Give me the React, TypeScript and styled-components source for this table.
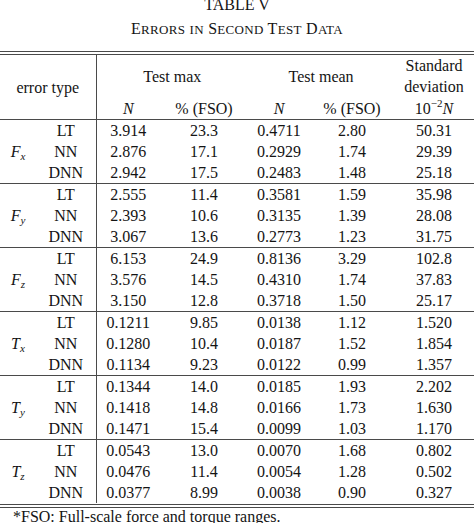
import React from "react";
import styled, { createGlobalStyle } from "styled-components";

const GlobalStyle = createGlobalStyle`
    html, body {
        margin: 0;
        padding: 0;
        background: #ffffff;
    }
    body {
        font-family: "Liberation Serif", "Times New Roman", serif;
        font-size: 16px;
        color: #141414;
        overflow: hidden;
    }
`;

const Page = styled.div`
    width: 474px;
    display: flex;
    flex-direction: column;
`;

const Caption = styled.div`
    display: flex;
    flex-direction: column;
    align-items: center;
    margin-top: -4px;
`;

const TableNo = styled.div`
    line-height: 18px;
`;

const Title = styled.div`
    line-height: 18px;
    margin-top: 6px;
    letter-spacing: 0.3px;
`;

const Sc = styled.span`
    font-size: 13px;
`;

const Rule = styled.div<{ $top: number }>`
    height: 2px;
    margin-top: ${p => p.$top}px;
    border-top: 1px solid #4a4a4a;
    border-bottom: 1px solid #4a4a4a;
`;

const Table = styled.table`
    width: 474px;
    table-layout: fixed;
    border-collapse: collapse;
    text-align: center;
`;

const Col = styled.col<{ $w: number }>`
    width: ${p => p.$w}px;
`;

const Head = styled.thead`
    border-bottom: 1px solid #4a4a4a;
`;

const HeadCell = styled.th<{ $h: number; $divider?: boolean }>`
    font-weight: normal;
    padding: 0;
    height: ${p => p.$h}px;
    line-height: 21px;
    vertical-align: middle;
    border-right: ${p => (p.$divider ? "1px solid #4a4a4a" : "none")};
`;

const Group = styled.tbody`
    & + & {
        border-top: 1px solid #4a4a4a;
    }
`;

const Cell = styled.td<{ $divider?: boolean }>`
    padding: 0;
    height: 21px;
    line-height: 20px;
    vertical-align: middle;
    border-right: ${p => (p.$divider ? "1px solid #4a4a4a" : "none")};
`;

const Italic = styled.i`
    font-style: italic;
`;

const Sub = styled.sub`
    font-size: 11px;
    font-style: italic;
    line-height: 0;
    vertical-align: -3px;
`;

const Sup = styled.sup`
    font-size: 11px;
    line-height: 0;
    vertical-align: 7px;
`;

const Footnote = styled.div`
    padding-left: 13px;
    line-height: 12px;
    margin-top: 3px;
`;

type Row = [string, string, string, string, string, string];

interface ErrorGroup {
    name: string;
    sub: string;
    rows: Row[];
}

const groups: ErrorGroup[] = [
    { name: "F", sub: "x", rows: [
        ["LT", "3.914", "23.3", "0.4711", "2.80", "50.31"],
        ["NN", "2.876", "17.1", "0.2929", "1.74", "29.39"],
        ["DNN", "2.942", "17.5", "0.2483", "1.48", "25.18"],
    ] },
    { name: "F", sub: "y", rows: [
        ["LT", "2.555", "11.4", "0.3581", "1.59", "35.98"],
        ["NN", "2.393", "10.6", "0.3135", "1.39", "28.08"],
        ["DNN", "3.067", "13.6", "0.2773", "1.23", "31.75"],
    ] },
    { name: "F", sub: "z", rows: [
        ["LT", "6.153", "24.9", "0.8136", "3.29", "102.8"],
        ["NN", "3.576", "14.5", "0.4310", "1.74", "37.83"],
        ["DNN", "3.150", "12.8", "0.3718", "1.50", "25.17"],
    ] },
    { name: "T", sub: "x", rows: [
        ["LT", "0.1211", "9.85", "0.0138", "1.12", "1.520"],
        ["NN", "0.1280", "10.4", "0.0187", "1.52", "1.854"],
        ["DNN", "0.1134", "9.23", "0.0122", "0.99", "1.357"],
    ] },
    { name: "T", sub: "y", rows: [
        ["LT", "0.1344", "14.0", "0.0185", "1.93", "2.202"],
        ["NN", "0.1418", "14.8", "0.0166", "1.73", "1.630"],
        ["DNN", "0.1471", "15.4", "0.0099", "1.03", "1.170"],
    ] },
    { name: "T", sub: "z", rows: [
        ["LT", "0.0543", "13.0", "0.0070", "1.68", "0.802"],
        ["NN", "0.0476", "11.4", "0.0054", "1.28", "0.502"],
        ["DNN", "0.0377", "8.99", "0.0038", "0.90", "0.327"],
    ] },
];

const widths = [36, 60, 64, 88, 62, 84, 80];

export default function App() {
    return (
        <Page>
            <GlobalStyle />
            <Caption>
                <TableNo>TABLE V</TableNo>
                <Title>
                    E<Sc>RRORS</Sc> <Sc>IN</Sc> S<Sc>ECOND</Sc> T<Sc>EST</Sc> D<Sc>ATA</Sc>
                </Title>
            </Caption>
            <Rule $top={12} />
            <Table>
                <colgroup>
                    {widths.map((w, i) => <Col key={i} $w={w} />)}
                </colgroup>
                <Head>
                    <tr>
                        <HeadCell $h={41} colSpan={2} rowSpan={2} $divider>error type</HeadCell>
                        <HeadCell $h={41} colSpan={2}>Test max</HeadCell>
                        <HeadCell $h={41} colSpan={2}>Test mean</HeadCell>
                        <HeadCell $h={41}>Standard<br />deviation</HeadCell>
                    </tr>
                    <tr>
                        <HeadCell $h={22}><Italic>N</Italic></HeadCell>
                        <HeadCell $h={22}>% (FSO)</HeadCell>
                        <HeadCell $h={22}><Italic>N</Italic></HeadCell>
                        <HeadCell $h={22}>% (FSO)</HeadCell>
                        <HeadCell $h={22}>10<Sup>−2</Sup><Italic>N</Italic></HeadCell>
                    </tr>
                </Head>
                {groups.map(g => (
                    <Group key={g.name + g.sub}>
                        {g.rows.map((r, i) => (
                            <tr key={r[0]}>
                                {i === 0 && (
                                    <Cell rowSpan={3}>
                                        <Italic>{g.name}</Italic><Sub>{g.sub}</Sub>
                                    </Cell>
                                )}
                                <Cell $divider>{r[0]}</Cell>
                                {r.slice(1).map((v, j) => <Cell key={j}>{v}</Cell>)}
                            </tr>
                        ))}
                    </Group>
                ))}
            </Table>
            <Rule $top={1} />
            <Footnote>*FSO: Full-scale force and torque ranges.</Footnote>
        </Page>
    );
}
